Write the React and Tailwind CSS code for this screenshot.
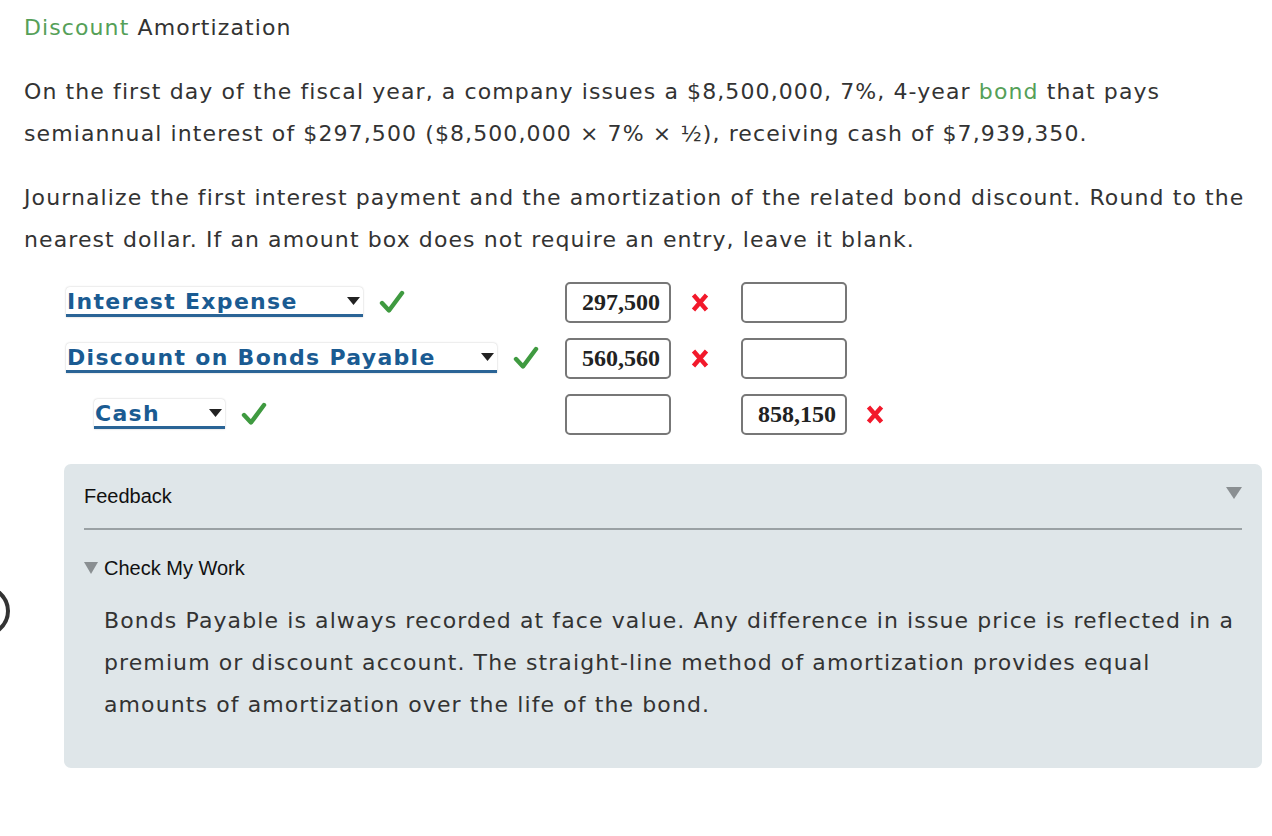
import React from "react";

const V = { fontFamily: '"DejaVu Sans", Verdana, sans-serif' };
const T = { fontFamily: '"Liberation Serif", "Times New Roman", serif' };
const A = { fontFamily: '"Liberation Sans", Arial, sans-serif' };

function Check() {
  return (
    <svg width="26" height="24" viewBox="0 0 26 24">
      <path d="M3 13 L10 20.5 L23 3" fill="none" stroke="#3f9a40" strokeWidth="4.4" strokeLinecap="round" strokeLinejoin="round" />
    </svg>
  );
}

function XMark() {
  return (
    <svg width="18" height="19" viewBox="0 0 18 19">
      <path d="M2.5 2 L15.5 17 M15.5 2 L2.5 17" stroke="#f2192b" strokeWidth="4.4" strokeLinecap="butt" />
    </svg>
  );
}

function Select({ label, w }) {
  return (
    <div
      className="flex items-center justify-between bg-white border-b-[3px] border-[#2a6496] rounded-t-[4px] shadow-[0_0_2px_rgba(0,0,0,0.25)] h-[30px] pr-[3px]"
      style={{ width: w }}
    >
      <span className="text-[#1a5b92] font-bold text-[22px] tracking-[1.3px] leading-none pl-[1px] pt-[2px]" style={V}>{label}</span>
      <svg width="13" height="8" viewBox="0 0 13 8"><path d="M0 0 H13 L6.5 8 Z" fill="#222" /></svg>
    </div>
  );
}

function Box({ value }) {
  return (
    <div
      className="w-[106px] h-[41px] border-2 border-[#777] rounded-[5px] bg-white flex items-center justify-end pr-[9px] text-[24px] tracking-normal font-bold text-[#222]"
      style={T}
    >
      {value}
    </div>
  );
}

function Row({ indent, label, w, d, c, dx, cx }) {
  return (
    <div className="flex items-center h-[56px]">
      <div className="w-[541px] flex items-center" style={{ paddingLeft: indent }}>
        <Select label={label} w={w} />
        <div className="ml-[16px]"><Check /></div>
      </div>
      <Box value={d} />
      <div className="w-[70px] pl-[20px] flex items-center">{dx && <XMark />}</div>
      <Box value={c} />
      <div className="pl-[19px] flex items-center">{cx && <XMark />}</div>
    </div>
  );
}

export default function App() {
  return (
    <div className="relative w-[1272px] h-[836px] bg-white overflow-hidden text-[#333] tracking-[1.1px]" style={V}>
      <svg className="absolute left-0 top-[583px]" width="12" height="56" viewBox="0 0 12 56">
        <ellipse cx="-22" cy="28" rx="30" ry="26" fill="none" stroke="#333" strokeWidth="4" />
      </svg>
      <div className="pl-[24px] pt-[13px]">
        <h1 className="text-[22px] leading-[30px] font-normal text-[#333]">
          <span className="text-[#55a058]">Discount</span> Amortization
        </h1>
        <p className="mt-[28px] text-[22px] leading-[42px] w-[1235px]">
          On the first day of the fiscal year, a company issues a $8,500,000, 7%, 4-year{" "}
          <span className="text-[#55a058]">bond</span> that pays semiannual interest of $297,500 ($8,500,000 × 7% × ½), receiving cash of $7,939,350.
        </p>
        <p className="mt-[22px] text-[22px] leading-[42px] w-[1235px]">
          Journalize the first interest payment and the amortization of the related bond discount. Round to the nearest dollar. If an amount box does not require an entry, leave it blank.
        </p>
        <div className="mt-[13px]">
          <Row indent={42} label="Interest Expense" w={297} d="297,500" c="" dx cx={false} />
          <Row indent={42} label="Discount on Bonds Payable" w={431} d="560,560" c="" dx cx={false} />
          <Row indent={70} label="Cash" w={131} d="" c="858,150" dx={false} cx />
        </div>
        <div className="ml-[40px] mt-[22px] w-[1198px] h-[304px] bg-[#dfe6e9] rounded-[7px] px-[20px] pt-[20px] tracking-normal">
          <div className="flex justify-between items-start border-b-2 border-[#9aa1a4] pb-[20px]">
            <span className="text-[20px] leading-[24px] text-[#111]" style={A}>Feedback</span>
            <svg className="mt-[3px]" width="16" height="12" viewBox="0 0 16 12"><path d="M0 0 H16 L8 12 Z" fill="#8a8f92" /></svg>
          </div>
          <div className="flex items-center mt-[26px]">
            <svg width="14" height="12" viewBox="0 0 14 12"><path d="M0 0 H14 L7 12 Z" fill="#8a8f92" /></svg>
            <span className="ml-[6px] text-[20px] leading-[24px] text-[#111]" style={A}>Check My Work</span>
          </div>
          <p className="pl-[20px] mt-[20px] text-[22px] leading-[42px] text-[#333] tracking-[1.1px]" style={V}>
            Bonds Payable is always recorded at face value. Any difference in issue price is reflected in a premium or discount account. The straight-line method of amortization provides equal amounts of amortization over the life of the bond.
          </p>
        </div>
      </div>
    </div>
  );
}
